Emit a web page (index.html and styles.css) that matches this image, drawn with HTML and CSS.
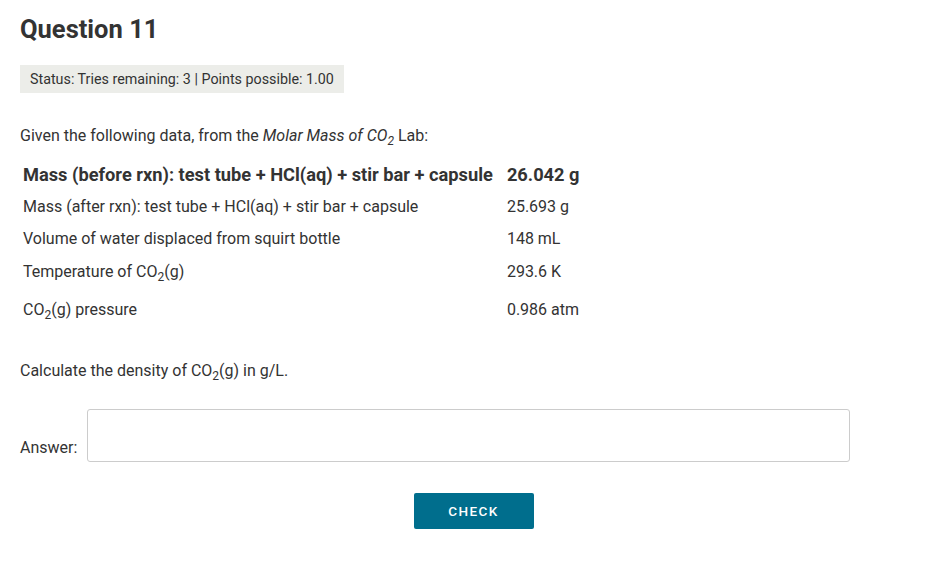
FILE: index.html
```html
<!DOCTYPE html>
<html>
<head>
<meta charset="utf-8">
<link rel="stylesheet" href="styles.css">
</head>
<body>
<div class="page">
  <h1 class="title">Question 11</h1>
  <div class="status">Status: Tries remaining: 3 | Points possible: 1.00</div>
  <p class="intro">Given the following data, from the <i>Molar Mass of CO<sub>2</sub></i> Lab:</p>
  <table class="data">
    <tr class="bold"><td>Mass (before rxn): test tube + HCl(aq) + stir bar + capsule</td><td>26.042 g</td></tr>
    <tr class="r2"><td>Mass (after rxn): test tube + HCl(aq) + stir bar + capsule</td><td>25.693 g</td></tr>
    <tr class="r3"><td>Volume of water displaced from squirt bottle</td><td>148 mL</td></tr>
    <tr class="r4"><td>Temperature of CO<sub>2</sub>(g)</td><td>293.6 K</td></tr>
    <tr class="r5"><td>CO<sub>2</sub>(g) pressure</td><td>0.986 atm</td></tr>
  </table>
  <p class="calc">Calculate the density of CO<sub>2</sub>(g) in g/L.</p>
  <div class="answer">
    <label class="answer-label">Answer:</label>
    <input class="answer-input" type="text">
  </div>
  <div class="actions"><button class="check">CHECK</button></div>
</div>
</body>
</html>
```
FILE: styles.css
```css
html, body { margin: 0; padding: 0; background: #fff; }
body { font-family: Roboto, "Liberation Sans", sans-serif; color: #333; }
.page { padding: 0 20px; width: 895px; }
.title { margin: 0; padding-top: 14px; font-size: 25.5px; font-weight: 700; line-height: 30px; color: #333; }
.status { display: inline-block; margin-top: 21px; background: #ecede9; font-size: 14.3px; line-height: 28px; padding: 0 10px; color: #333; }
.intro { margin: 33px 0 0; font-size: 16px; line-height: 20px; }
sub { font-size: 0.75em; line-height: 0; vertical-align: -0.3em; }
.data { border-collapse: collapse; margin-top: 12px; }
.data td { padding: 0 3px; font-size: 16px; vertical-align: middle; }
.data td:last-child { padding-left: 11px; }
.data .bold td { font-weight: 700; font-size: 18.25px; height: 32px; }
.data .r2 td { height: 32px; }
.data .r3 td { height: 32px; }
.data .r4 td { height: 34px; }
.data .r5 td { height: 42px; }
.calc { margin: 31px 0 0; font-size: 16px; line-height: 20px; }
.answer { display: flex; align-items: flex-end; margin-top: 28px; }
.answer-label { font-size: 16px; padding-bottom: 5px; width: 67px; }
.answer-input { width: 763px; height: 53px; box-sizing: border-box; border: 1px solid #ccc; border-radius: 3px; margin: 0; padding: 0 10px; font-family: inherit; }
.actions { display: flex; justify-content: center; margin-top: 31px; padding-left: 8px; }
.check { width: 120px; height: 36px; border: 0; border-radius: 2px; background: #006e8d; color: #fff; font-family: Roboto, sans-serif; font-size: 13.5px; font-weight: 500; letter-spacing: 1.4px; margin-left: 4px; }
```
